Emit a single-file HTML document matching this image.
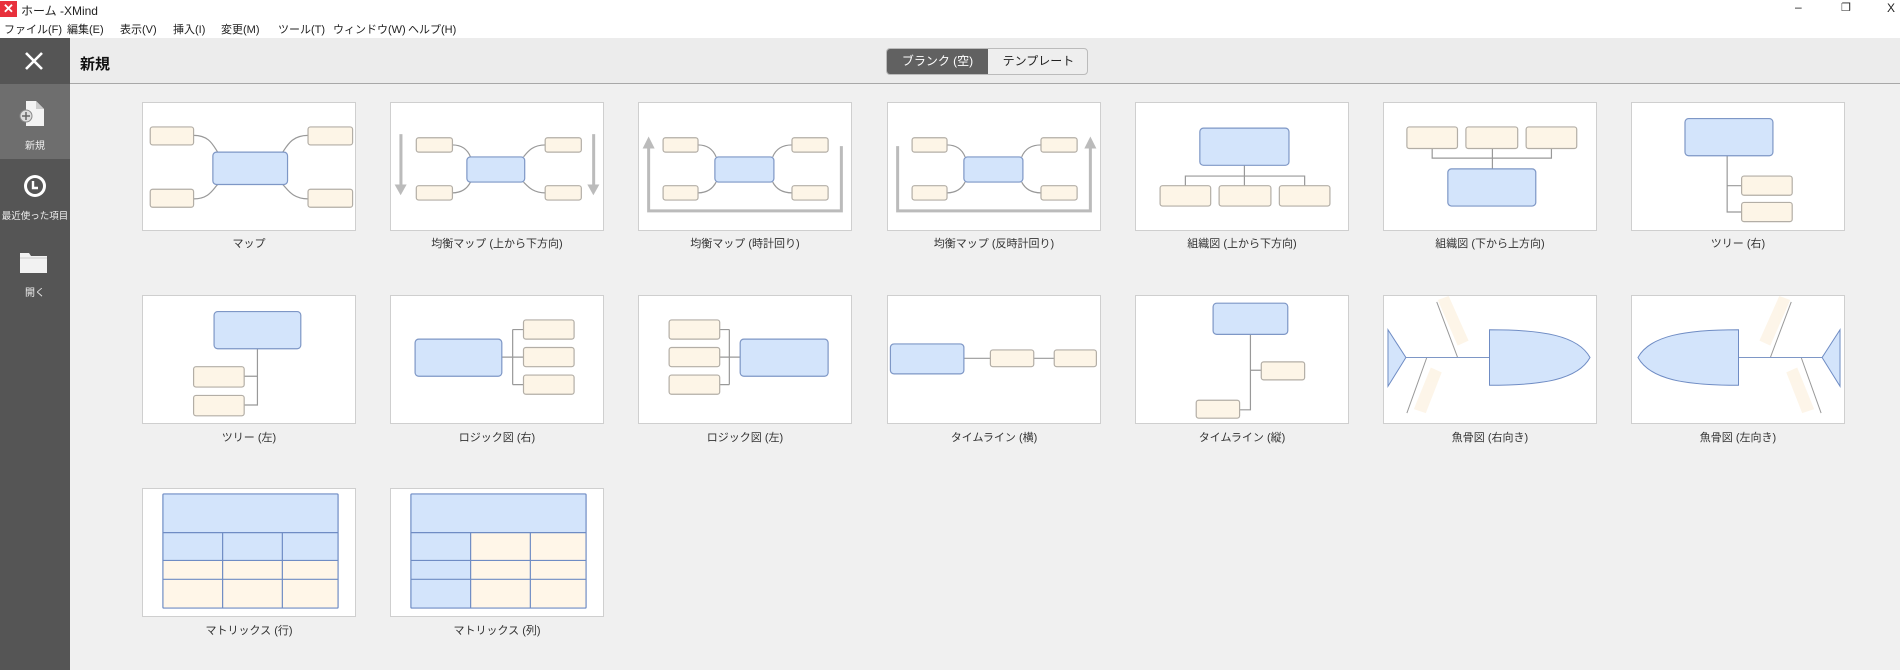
<!DOCTYPE html>
<html><head><meta charset="utf-8"><style>
*{margin:0;padding:0;box-sizing:border-box}
body{width:1900px;height:670px;overflow:hidden;background:#f0f0f0;font-family:"Liberation Sans","Noto Sans CJK JP",sans-serif;position:relative;color:#222}
.abs{position:absolute}
.card{position:absolute;width:214px;height:129px;background:#fff;border:1px solid #cfcfcf}
.card svg{position:absolute;left:0;top:0;width:212px;height:127px}
.lbl{position:absolute;width:214px;text-align:center;font-size:11px;color:#333}
.menu span{position:absolute;top:21px;font-size:11px;color:#222}
.side{position:absolute;left:0;top:38px;width:70px;height:632px;background:#555}
.si{position:absolute;width:70px;text-align:center;color:#eee;font-size:10px}
</style></head><body>
<div class="abs" style="left:0;top:0;width:1900px;height:38px;background:#fff"></div>
<div class="abs" style="left:0;top:1px;width:17px;height:16px;background:#e8303c;color:#fff;font-size:13px;font-weight:bold;line-height:16px;text-align:center">✕</div>
<div class="abs" style="left:21px;top:2px;font-size:12px">ホーム -XMind</div>
<div class="abs" style="left:1795px;top:0;font-size:12px">–</div>
<div class="abs" style="left:1841px;top:1px;font-size:11px">❐</div>
<div class="abs" style="left:1887px;top:1px;font-size:12px">X</div>
<div class="menu"><span style="left:4px">ファイル(F)</span><span style="left:67px">編集(E)</span><span style="left:120px">表示(V)</span><span style="left:173px">挿入(I)</span><span style="left:221px">変更(M)</span><span style="left:278px">ツール(T)</span><span style="left:333px">ウィンドウ(W)</span><span style="left:408px">ヘルプ(H)</span></div>
<div class="abs" style="left:70px;top:38px;width:1830px;height:46px;background:#ececec;border-bottom:1px solid #a8a8a8"></div>
<div class="abs" style="left:80px;top:53px;font-size:15px;font-weight:bold;color:#111">新規</div>
<div class="abs" style="left:886px;top:48px;width:202px;height:27px;border:1px solid #bbb;border-radius:4px;background:#eee;overflow:hidden;font-size:12px">
<div class="abs" style="left:0;top:0;width:101px;height:27px;background:#616161;color:#fff;text-align:center;line-height:25px">ブランク (空)</div>
<div class="abs" style="left:101px;top:0;width:101px;height:27px;text-align:center;line-height:25px;color:#222">テンプレート</div></div>
<div class="side"></div>
<div class="abs" style="left:0;top:84px;width:70px;height:75px;background:#6e6e6e"></div>
<svg class="abs" style="left:22px;top:49px" width="24" height="24"><path d="M4 4L20 20M20 4L4 20" stroke="#fff" stroke-width="2.6"/></svg>
<svg class="abs" style="left:18px;top:99px" width="30" height="30"><path d="M8 2h10l8 8v17H8z" fill="#f3f3f3"/><path d="M18 2v8h8" fill="#ccc"/><circle cx="8" cy="17" r="6" fill="#ddd" stroke="#888"/><path d="M8 13v8M4 17h8" stroke="#666" stroke-width="1.5"/></svg>
<div class="si" style="top:137px">新規</div>
<svg class="abs" style="left:22px;top:172px" width="26" height="28"><circle cx="13" cy="14" r="11" fill="#fff"/><circle cx="13" cy="14" r="8" fill="#555"/><path d="M11 9v7h5" stroke="#fff" stroke-width="2.4" fill="none"/></svg>
<div class="si" style="top:208px;font-size:9.5px">最近使った項目</div>
<svg class="abs" style="left:19px;top:250px" width="30" height="24"><path d="M1 3h9l2 3h16v17H1z" fill="#f2f2f2"/><path d="M1 8h27" stroke="#ccc"/></svg>
<div class="si" style="top:284px">開く</div>

<!-- Row 1 -->
<div class="card" style="left:142px;top:102px"><svg viewBox="0 0 176 106" preserveAspectRatio="none"><g fill="none" stroke="#999"><path d="M42 27C55 27 58 35 62 41M42 80C55 80 58 72 62 68M137 27C124 27 120 35 116 41M137 80C124 80 120 72 116 68"/></g><g fill="#fdf5e7" stroke="#b3aea6"><rect x="6" y="20" width="36" height="15" rx="2"/><rect x="6" y="72" width="36" height="15" rx="2"/><rect x="137" y="20" width="37" height="15" rx="2"/><rect x="137" y="72" width="37" height="15" rx="2"/></g><rect x="58" y="41" width="62" height="27" rx="3" fill="#d3e4fb" stroke="#7e97c6"/></svg></div>
<div class="lbl" style="left:142px;top:235px">マップ</div>

<div class="card" style="left:390px;top:102px"><svg viewBox="0 0 176 106" preserveAspectRatio="none"><g fill="none" stroke="#999"><path d="M51 35C60 35 64 40 66 45M51 75C60 75 64 70 66 66M128 35C118 35 114 40 110 45M128 75C118 75 114 70 110 66"/></g><g fill="#bbb"><rect x="7" y="26" width="2.5" height="44"/><path d="M3 68h10l-5 9z"/><rect x="167" y="26" width="2.5" height="44"/><path d="M163 68h10l-5 9z"/></g><g fill="#fdf5e7" stroke="#b3aea6"><rect x="21" y="29" width="30" height="12" rx="2"/><rect x="21" y="69" width="30" height="12" rx="2"/><rect x="128" y="29" width="30" height="12" rx="2"/><rect x="128" y="69" width="30" height="12" rx="2"/></g><rect x="63" y="45" width="48" height="21" rx="3" fill="#d3e4fb" stroke="#7e97c6"/></svg></div>
<div class="lbl" style="left:390px;top:235px">均衡マップ (上から下方向)</div>

<div class="card" style="left:638px;top:102px"><svg viewBox="0 0 176 106" preserveAspectRatio="none"><g fill="none" stroke="#999"><path d="M49 35C58 35 62 40 64 45M49 75C58 75 62 70 64 66M127 35C117 35 113 40 111 45M127 75C117 75 113 70 111 66"/></g><path d="M8 36V90H168V36" fill="none" stroke="#bbb" stroke-width="2.5"/><path d="M3 38h10l-5-10z" fill="#bbb"/><g fill="#fdf5e7" stroke="#b3aea6"><rect x="20" y="29" width="29" height="12" rx="2"/><rect x="20" y="69" width="29" height="12" rx="2"/><rect x="127" y="29" width="30" height="12" rx="2"/><rect x="127" y="69" width="30" height="12" rx="2"/></g><rect x="63" y="45" width="49" height="21" rx="3" fill="#d3e4fb" stroke="#7e97c6"/></svg></div>
<div class="lbl" style="left:638px;top:235px">均衡マップ (時計回り)</div>

<div class="card" style="left:887px;top:102px"><svg viewBox="0 0 176 106" preserveAspectRatio="none"><g fill="none" stroke="#999"><path d="M49 35C58 35 62 40 64 45M49 75C58 75 62 70 64 66M127 35C117 35 113 40 111 45M127 75C117 75 113 70 111 66"/></g><path d="M8 36V90H168V36" fill="none" stroke="#bbb" stroke-width="2.5"/><path d="M163 38h10l-5-10z" fill="#bbb"/><g fill="#fdf5e7" stroke="#b3aea6"><rect x="20" y="29" width="29" height="12" rx="2"/><rect x="20" y="69" width="29" height="12" rx="2"/><rect x="127" y="29" width="30" height="12" rx="2"/><rect x="127" y="69" width="30" height="12" rx="2"/></g><rect x="63" y="45" width="49" height="21" rx="3" fill="#d3e4fb" stroke="#7e97c6"/></svg></div>
<div class="lbl" style="left:887px;top:235px">均衡マップ (反時計回り)</div>

<div class="card" style="left:1135px;top:102px"><svg viewBox="0 0 176 106" preserveAspectRatio="none"><path d="M90 52V69M41 69V61H140V69" fill="none" stroke="#999"/><rect x="53" y="21" width="74" height="31" rx="3" fill="#d3e4fb" stroke="#7e97c6"/><g fill="#fdf5e7" stroke="#b3aea6"><rect x="20" y="69" width="42" height="17" rx="2"/><rect x="69" y="69" width="43" height="17" rx="2"/><rect x="119" y="69" width="42" height="17" rx="2"/></g></svg></div>
<div class="lbl" style="left:1135px;top:235px">組織図 (上から下方向)</div>

<div class="card" style="left:1383px;top:102px"><svg viewBox="0 0 176 106" preserveAspectRatio="none"><path d="M90 38V55M40 38V46H139V38" fill="none" stroke="#999"/><g fill="#fdf5e7" stroke="#b3aea6"><rect x="19" y="20" width="42" height="18" rx="2"/><rect x="68" y="20" width="43" height="18" rx="2"/><rect x="118" y="20" width="42" height="18" rx="2"/></g><rect x="53" y="55" width="73" height="31" rx="3" fill="#d3e4fb" stroke="#7e97c6"/></svg></div>
<div class="lbl" style="left:1383px;top:235px">組織図 (下から上方向)</div>

<div class="card" style="left:1631px;top:102px"><svg viewBox="0 0 176 106" preserveAspectRatio="none"><path d="M79 44V91H91M79 69H91" fill="none" stroke="#999"/><rect x="44" y="13" width="73" height="31" rx="3" fill="#d3e4fb" stroke="#7e97c6"/><g fill="#fdf5e7" stroke="#b3aea6"><rect x="91" y="61" width="42" height="16" rx="2"/><rect x="91" y="83" width="42" height="16" rx="2"/></g></svg></div>
<div class="lbl" style="left:1631px;top:235px">ツリー (右)</div>

<!-- Row 2 -->
<div class="card" style="left:142px;top:295px"><svg viewBox="0 0 176 106" preserveAspectRatio="none"><path d="M95 44V91H84M95 67H84" fill="none" stroke="#999"/><rect x="59" y="13" width="72" height="31" rx="3" fill="#d3e4fb" stroke="#7e97c6"/><g fill="#fdf5e7" stroke="#b3aea6"><rect x="42" y="59" width="42" height="17" rx="2"/><rect x="42" y="83" width="42" height="17" rx="2"/></g></svg></div>
<div class="lbl" style="left:142px;top:429px">ツリー (左)</div>

<div class="card" style="left:390px;top:295px"><svg viewBox="0 0 176 106" preserveAspectRatio="none"><path d="M92 51H101M101 28V74M101 28H110M101 51H110M101 74H110" fill="none" stroke="#999"/><rect x="20" y="36" width="72" height="31" rx="3" fill="#d3e4fb" stroke="#7e97c6"/><g fill="#fdf5e7" stroke="#b3aea6"><rect x="110" y="20" width="42" height="16" rx="2"/><rect x="110" y="43" width="42" height="16" rx="2"/><rect x="110" y="66" width="42" height="16" rx="2"/></g></svg></div>
<div class="lbl" style="left:390px;top:429px">ロジック図 (右)</div>

<div class="card" style="left:638px;top:295px"><svg viewBox="0 0 176 106" preserveAspectRatio="none"><path d="M84 51H75M75 28V74M75 28H67M75 51H67M75 74H67" fill="none" stroke="#999"/><rect x="84" y="36" width="73" height="31" rx="3" fill="#d3e4fb" stroke="#7e97c6"/><g fill="#fdf5e7" stroke="#b3aea6"><rect x="25" y="20" width="42" height="16" rx="2"/><rect x="25" y="43" width="42" height="16" rx="2"/><rect x="25" y="66" width="42" height="16" rx="2"/></g></svg></div>
<div class="lbl" style="left:638px;top:429px">ロジック図 (左)</div>

<div class="card" style="left:887px;top:295px"><svg viewBox="0 0 176 106" preserveAspectRatio="none"><path d="M63 52H138" fill="none" stroke="#999"/><rect x="2" y="40" width="61" height="25" rx="3" fill="#d3e4fb" stroke="#7e97c6"/><g fill="#fdf5e7" stroke="#b3aea6"><rect x="85" y="45" width="36" height="14" rx="2"/><rect x="138" y="45" width="35" height="14" rx="2"/></g></svg></div>
<div class="lbl" style="left:887px;top:429px">タイムライン (横)</div>

<div class="card" style="left:1135px;top:295px"><svg viewBox="0 0 176 106" preserveAspectRatio="none"><path d="M95 32V95H86M95 62H104" fill="none" stroke="#999"/><rect x="64" y="6" width="62" height="26" rx="3" fill="#d3e4fb" stroke="#7e97c6"/><g fill="#fdf5e7" stroke="#b3aea6"><rect x="104" y="55" width="36" height="15" rx="2"/><rect x="50" y="87" width="36" height="15" rx="2"/></g></svg></div>
<div class="lbl" style="left:1135px;top:429px">タイムライン (縦)</div>

<div class="card" style="left:1383px;top:295px"><svg viewBox="0 0 213 128" preserveAspectRatio="none"><g fill="#fdf3e3" opacity="0.8"><path d="M54 4L65 0L85 45L74 50z"/><path d="M47 72L58 77L42 118L30 114z"/></g><path d="M22 62H106M53 6L74 62M43 62L23 118" fill="none" stroke="#999"/><path d="M22 62H106" stroke="#7e97c6"/><path d="M4 34L22 62L4 91z" fill="#d3e4fb" stroke="#6f8cc4"/><path d="M106 34C160 34 195 40 207 62C195 84 160 90 106 90z" fill="#d3e4fb" stroke="#6f8cc4"/></svg></div>
<div class="lbl" style="left:1383px;top:429px">魚骨図 (右向き)</div>

<div class="card" style="left:1631px;top:295px"><svg viewBox="0 0 213 128" preserveAspectRatio="none"><g transform="translate(213 0) scale(-1 1)"><g fill="#fdf3e3" opacity="0.8"><path d="M54 4L65 0L85 45L74 50z"/><path d="M47 72L58 77L42 118L30 114z"/></g><path d="M53 6L74 62M43 62L23 118" fill="none" stroke="#999"/><path d="M22 62H106" stroke="#7e97c6"/><path d="M4 34L22 62L4 91z" fill="#d3e4fb" stroke="#6f8cc4"/><path d="M106 34C160 34 195 40 207 62C195 84 160 90 106 90z" fill="#d3e4fb" stroke="#6f8cc4"/></g></svg></div>
<div class="lbl" style="left:1631px;top:429px">魚骨図 (左向き)</div>

<!-- Row 3 -->
<div class="card" style="left:142px;top:488px"><svg viewBox="0 0 213 128" preserveAspectRatio="none"><rect x="20" y="5" width="176" height="67" fill="#d3e4fb"/><rect x="20" y="72" width="176" height="48" fill="#fff6e8"/><g fill="none" stroke="#6f8cc4" stroke-width="1.2"><rect x="20" y="5" width="176" height="115" rx="1"/><path d="M20 44H196M20 72H196M20 91H196M80 44V120M140 44V120"/></g></svg></div>
<div class="lbl" style="left:142px;top:622px">マトリックス (行)</div>

<div class="card" style="left:390px;top:488px"><svg viewBox="0 0 213 128" preserveAspectRatio="none"><rect x="20" y="5" width="176" height="115" fill="#d3e4fb"/><rect x="80" y="44" width="116" height="76" fill="#fff6e8"/><g fill="none" stroke="#6f8cc4" stroke-width="1.2"><rect x="20" y="5" width="176" height="115" rx="1"/><path d="M20 44H196M20 72H196M20 91H196M80 44V120M140 44V120"/></g></svg></div>
<div class="lbl" style="left:390px;top:622px">マトリックス (列)</div>
</body></html>
